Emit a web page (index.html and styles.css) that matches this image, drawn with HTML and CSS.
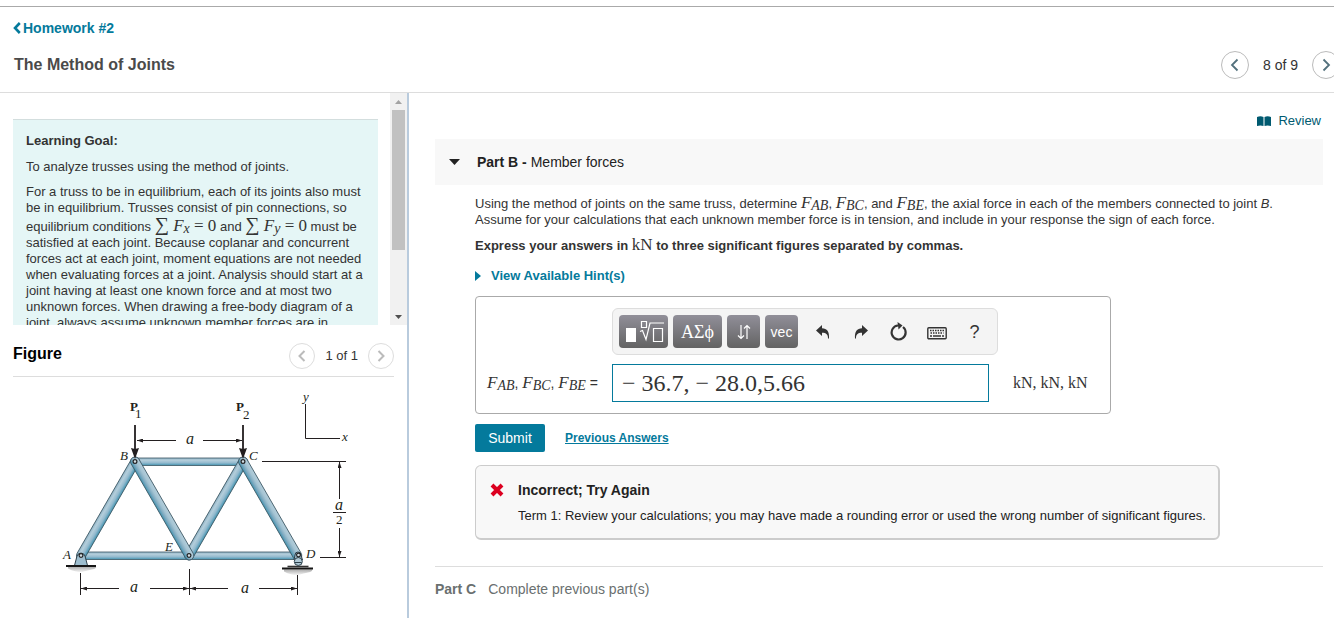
FILE: index.html
```html
<!DOCTYPE html>
<html lang="en">
<head>
<meta charset="utf-8">
<title>The Method of Joints</title>
<link rel="stylesheet" href="styles.css">
</head>
<body>
<header class="header">
  <div class="titles">
    <a class="back" href="#"><svg width="8" height="12" viewBox="0 0 8 12"><path d="M6.800 1 2 6l4.800 5" fill="none" stroke="currentColor" stroke-width="2.600"/></svg>Homework #2</a>
    <h1 class="title">The Method of Joints</h1>
  </div>
  <nav class="pager" aria-label="Items">
    <button class="round" aria-label="Previous item"><svg width="12" height="14" viewBox="0 0 12 14"><path d="M8.500 1.500 3 7l5.500 5.500" fill="none" stroke="currentColor" stroke-width="1.800"/></svg></button>
    <span>8 of 9</span>
    <button class="round" aria-label="Next item"><svg width="12" height="14" viewBox="0 0 12 14"><path d="M3.500 1.500 9 7l-5.500 5.500" fill="none" stroke="currentColor" stroke-width="1.800"/></svg></button>
  </nav>
</header>
<div class="content">
  <aside class="side">
    <div class="scroller">
      <div class="viewport">
        <section class="goal">
          <h2 class="goal-title">Learning Goal:</h2>
          <p>To analyze trusses using the method of joints.</p>
          <p>For a truss to be in equilibrium, each of its joints also must be in equilibrium. Trusses consist of pin connections, so equilibrium conditions <span class="math"><span class="sum">∑</span> <i>F<sub>x</sub></i> = 0</span> and <span class="math"><span class="sum">∑</span> <i>F<sub>y</sub></i> = 0</span> must be satisfied at each joint. Because coplanar and concurrent forces act at each joint, moment equations are not needed when evaluating forces at a joint. Analysis should start at a joint having at least one known force and at most two unknown forces. When drawing a free-body diagram of a joint, always assume unknown member forces are in tension.</p>
        </section>
      </div>
      <div class="scrollbar" aria-hidden="true">
        <svg width="17" height="17" viewBox="0 0 17 17"><path d="M5 11h7L8.500 7z" fill="#a3a3a3"/></svg>
        <div class="thumb"></div>
        <svg class="down" width="17" height="17" viewBox="0 0 17 17"><path d="M5 7h7l-3.500 4z" fill="#505050"/></svg>
      </div>
    </div>
    <section class="figure">
      <div class="figure-head">
        <h2 class="figure-title">Figure</h2>
        <nav class="figure-nav" aria-label="Figures">
          <button class="round faint" aria-label="Previous figure" disabled><svg width="12" height="14" viewBox="0 0 12 14"><path d="M8.500 2 3.500 7l5 5" fill="none" stroke="currentColor" stroke-width="2"/></svg></button>
          <span>1 of 1</span>
          <button class="round faint" aria-label="Next figure" disabled><svg width="12" height="14" viewBox="0 0 12 14"><path d="M3.500 2 8.500 7l-5 5" fill="none" stroke="currentColor" stroke-width="2"/></svg></button>
        </nav>
      </div>
      <svg class="truss" width="381" height="228" viewBox="13 380 381 228" role="img" aria-label="Truss ABCDE loaded at B and C">
        <defs>
          <linearGradient id="steel" x1="0" y1="0" x2="0" y2="1"><stop offset="0" stop-color="#8fb3c6"/><stop offset=".3" stop-color="#b4cedb"/><stop offset=".65" stop-color="#94bace"/><stop offset="1" stop-color="#3f93b0"/></linearGradient>
          <linearGradient id="steel2" x1="0" y1="0" x2="0" y2="1"><stop offset="0" stop-color="#b4cedb"/><stop offset=".4" stop-color="#a5c4d3"/><stop offset=".7" stop-color="#80abc1"/><stop offset="1" stop-color="#3f93b0"/></linearGradient>
          <linearGradient id="ground" x1="0" y1="0" x2="0" y2="1"><stop offset="0" stop-color="#aaa"/><stop offset="1" stop-color="#f4f4f4"/></linearGradient>
          <marker id="tip" viewBox="0 0 6 4" refX="6" refY="2" markerWidth="6" markerHeight="4" markerUnits="userSpaceOnUse" orient="auto"><path d="M0 0 6 2 0 4z" fill="#231f20"/></marker>
        </defs>
        <g stroke="#3c5663" stroke-width=".8">
          <rect x="81" y="552" width="217" height="7.500" fill="url(#steel)"/>
          <rect x="135" y="458" width="108" height="7.500" fill="url(#steel)"/>
          <rect x="-4.500" y="-4.500" width="117.500" height="9" rx="4.500" fill="url(#steel)" transform="translate(81 555.500) rotate(-60)"/>
          <rect x="-4.500" y="-4.500" width="117.500" height="9" rx="4.500" fill="url(#steel)" transform="translate(189 555.500) rotate(-60)"/>
          <rect x="-4.500" y="-4.500" width="117.500" height="9" rx="4.500" fill="url(#steel2)" transform="translate(243 461.500) rotate(60)"/>
          <rect x="-4.500" y="-4.500" width="117.500" height="9" rx="4.500" fill="url(#steel2)" transform="translate(135 461.500) rotate(60)"/>
        </g>
        <path d="M68 566.500h28q1 2-4 3t-8 2-8 0-8-3z" fill="url(#ground)"/>
        <path d="M284 569.500h28q1 2-4 3t-8 2-8 0-8-3z" fill="url(#ground)"/>
        <path d="M74.500 565.500 77 556a4.200 4.200 0 0 1 8 0l2.500 9.500z" fill="#9dbdce" stroke="#2d3f49"/>
        <path d="M66 566h30M282 568.500h31" stroke="#161616" stroke-width="1.800"/>
        <path d="M287.500 566.500h21" stroke="#333" stroke-width="1.600"/>
        <path d="M294 560 295 555a3 3 0 0 1 6 0l1.500 5z" fill="#9dbdce" stroke="#2d3f49"/>
        <circle cx="298.300" cy="561.500" r="4" fill="#aec8d5" stroke="#2d3f49"/><path d="M295 562.500h6.500" stroke="#2d3f49"/>
        <g fill="#d3dfe5" stroke="#222" stroke-width="1.200"><circle cx="81" cy="555.500" r="1.900"/><circle cx="135" cy="461.500" r="1.900"/><circle cx="243" cy="461.500" r="1.900"/><circle cx="189" cy="555.500" r="1.900"/><circle cx="298.500" cy="555" r="1.900"/></g>
        <g fill="none" stroke="#231f20" stroke-width="1">
          <path d="M80.500 573v22M189.500 569v26M297.500 575v20M262 461.500h84M320 557.500h26M333 512.500h13M305.500 404v34.500H340"/>
          <g marker-end="url(#tip)">
            <path d="M176 440.500h-39"/><path d="M203 440.500h39"/>
            <path d="M119 588.500H81"/><path d="M150 588.500h39"/>
            <path d="M228 588.500h-38"/><path d="M259 588.500h38"/>
            <path d="M339.500 499v-37"/><path d="M339.500 528v29"/>
          </g>
        </g>
        <path d="M135 425v27M243 425v27" stroke="#231f20" stroke-width="1.800"/>
        <path d="m131 448 4 1 4-1-4 11zM239 448l4 1 4-1-4 11z" fill="#231f20"/>
        <g class="labels">
          <text class="load" x="130" y="411">P</text><text class="num" x="135" y="418">1</text>
          <text class="load" x="236" y="411">P</text><text class="num" x="243" y="419">2</text>
          <text x="120" y="460">B</text><text x="249" y="460">C</text><text x="63" y="559">A</text><text x="165" y="551">E</text><text x="306" y="558">D</text>
          <text x="303" y="401">y</text><text x="342" y="441">x</text>
          <text class="dim" x="186" y="444">a</text><text class="dim" x="130" y="592">a</text><text class="dim" x="241" y="593">a</text><text class="dim" x="335" y="510">a</text><text class="num" x="336" y="524">2</text>
        </g>
      </svg>
    </section>
  </aside>
  <main class="main">
    <a class="review" href="#"><svg width="14" height="11" viewBox="0 0 14 11"><path d="M0 1Q3.500-.500 6.500 1v9Q3.500 9 0 10zM7.500 1Q10.500-.500 14 1v9q-3.500-1-6.500 0z" fill="currentColor"/></svg>Review</a>
    <h2 class="part"><svg width="11" height="6" viewBox="0 0 11 6"><path d="M0 0h11L5.500 6z" fill="#222"/></svg><span><b>Part B -</b> Member forces</span></h2>
    <div class="problem">
      <p class="statement">Using the method of joints on the same truss, determine <i class="math">F<sub>AB</sub></i>, <i class="math">F<sub>BC</sub></i>, and <i class="math">F<sub>BE</sub></i>, the axial force in each of the members connected to joint <i>B</i>. Assume for your calculations that each unknown member force is in tension, and include in your response the sign of each force.</p>
      <p class="express">Express your answers in <span class="math">kN</span> to three significant figures separated by commas.</p>
      <a class="hints" href="#"><svg width="6" height="10" viewBox="0 0 6 10"><path d="M0 0v10l6-5z" fill="currentColor"/></svg>View Available Hint(s)</a>
      <form class="answer">
        <div class="toolbar">
          <button type="button" class="key wide" aria-label="Templates"><svg width="40" height="24" viewBox="0 0 40 24"><path d="M2 8h10v14H2z" fill="#fff"/><g fill="none" stroke="#fff" stroke-width="1.200"><path d="M17.500 1.500h5v6h-5zM29.500 8.500h9v13h-9z"/><path d="m16 11.500 2.500-1 3.500 9 4-16.500h14"/></g></svg></button>
          <button type="button" class="key wide greek">ΑΣϕ</button>
          <button type="button" class="key" aria-label="Subscript and superscript"><svg width="14" height="16" viewBox="0 0 14 16"><path d="M4 1v13.500M1 11.500l3 3 3-3M10 15V1.500M7 4.500l3-3 3 3" fill="none" stroke="#fff" stroke-width="1.200"/></svg></button>
          <button type="button" class="key vec">vec</button>
          <button type="button" class="tool" aria-label="Undo"><svg width="16" height="16" viewBox="0 0 16 16"><path d="M1 6.500 7 1v3.200c5 .2 7.500 3 7 10.300h-1c.2-4-1.700-5.800-6-5.800V12z" fill="#333"/></svg></button>
          <button type="button" class="tool" aria-label="Redo"><svg width="16" height="16" viewBox="0 0 16 16"><path d="M15 6.500 9 1v3.200c-5 .2-7.500 3-7 10.300h1c-.2-4 1.700-5.800 6-5.800V12z" fill="#333"/></svg></button>
          <button type="button" class="tool" aria-label="Reset"><svg width="18" height="20" viewBox="0 0 18 20"><path d="M13 5A7 7 0 1 1 8 3.500" fill="none" stroke="#333" stroke-width="2.200"/><path d="m7.500 0 5 3.500L8.500 7.500z" fill="#333"/></svg></button>
          <button type="button" class="tool" aria-label="Keyboard"><svg width="20" height="18" viewBox="0 0 20 18"><rect x=".8" y="4.800" width="18.400" height="11" rx="1" fill="#f4f4f4" stroke="#333" stroke-width="1.400"/><path d="M3 7.500h14M3.500 10h13" stroke="#333" stroke-width="1.600" stroke-dasharray="1.500 1"/><path d="M3 13h2m1 0h8m1 0h2" stroke="#333" stroke-width="1.500"/></svg></button>
          <button type="button" class="tool help" aria-label="Help">?</button>
        </div>
        <label class="answer-label" for="answer"><i class="math">F<sub>AB</sub></i>, <i class="math">F<sub>BC</sub></i>, <i class="math">F<sub>BE</sub></i> =</label>
        <input class="answer-input" id="answer" type="text" value="− 36.7, − 28.0,5.66">
        <span class="units">kN, kN, kN</span>
      </form>
      <div class="actions">
        <button class="submit">Submit</button>
        <a class="previous" href="#">Previous Answers</a>
      </div>
      <section class="feedback">
        <svg width="14" height="16" viewBox="0 0 14 16"><path d="m2 3 10 10M12 3 2 13" stroke="#dc0020" stroke-width="4"/></svg>
        <div>
          <h3 class="feedback-title">Incorrect; Try Again</h3>
          <p>Term 1: Review your calculations; you may have made a rounding error or used the wrong number of significant figures.</p>
        </div>
      </section>
    </div>
    <div class="next-part"><b>Part C</b><span>Complete previous part(s)</span></div>
  </main>
</div>
</body>
</html>
```
FILE: styles.css
```css
* { box-sizing: border-box; }
body { margin: 0; padding-top: 6px; min-height: 100vh; display: flex; flex-direction: column; background: #fff; color: #333; font: 13px/16px "Liberation Sans", Arial, sans-serif; overflow: hidden; }
h1, h2, h3, p { margin: 0; }
svg { display: block; flex: none; }
a { color: #047a9c; text-decoration: none; }
button { padding: 0; border: 0; background: none; color: inherit; font: inherit; }

.header { display: flex; justify-content: space-between; align-items: flex-end; border-top: 1px solid #aaa; border-bottom: 1px solid #ddd; padding: 11px 0 13px 13px; }
.titles { display: flex; flex-direction: column; gap: 15px; padding-bottom: 2px; }
.back { display: flex; align-items: center; gap: 2px; font-size: 14px; line-height: 20px; font-weight: bold; }
.title { font-size: 16px; line-height: 24px; color: #4a4a4a; padding-left: 1px; }
.pager { display: flex; align-items: center; gap: 14px; margin-right: -6px; font-size: 14px; }
.round { width: 28px; height: 28px; display: flex; align-items: center; justify-content: center; border: 1px solid #bbb; border-radius: 50%; color: #52707c; }
.faint { width: 26px; height: 26px; border-color: #ddd; color: #bbb; }

.content { flex: 1; display: flex; }
.side { flex: none; width: 409px; border-right: 2px solid #b9cbdd; }
.scroller { display: flex; height: 232px; }
.viewport { flex: 1; overflow: hidden; padding: 26px 12px 0 13px; }
.goal { background: #e5f6f6; border-top: 1px solid #d3dede; padding: 12px 13px; display: flex; flex-direction: column; gap: 9px; }
.goal-title { font-size: 13px; line-height: 18px; }
.scrollbar { width: 17px; display: flex; flex-direction: column; align-items: center; background: #f1f1f1; }
.thumb { width: 13px; height: 140px; background: #c1c1c1; }
.down { margin-top: auto; }
.math { font-family: "Liberation Serif", "Times New Roman", serif; font-size: 17px; line-height: 16px; font-weight: normal; white-space: nowrap; }
.math sub { font-size: 14px; line-height: 0; vertical-align: -2px; }
.goal .math { line-height: 19px; }
.sum { font-size: 20px; line-height: 0; }

.figure { padding: 18px 13px 0; }
.figure-head { display: flex; justify-content: space-between; align-items: center; border-bottom: 1px solid #ddd; padding-bottom: 7px; }
.figure-title { font-size: 16px; line-height: 20px; color: #000; padding-bottom: 4px; }
.figure-nav { display: flex; align-items: center; gap: 10px; }
.truss { margin-top: 3px; }
.labels text { font: italic 13px "Liberation Serif", serif; fill: #231f20; }
.labels .load { font: bold 13px "Liberation Serif", serif; }
.labels .num { font: 13px "Liberation Serif", serif; }
.labels .dim { font-size: 16px; }

.main { flex: 1; min-width: 0; padding: 19px 11px 0 26px; }
.review { display: flex; justify-content: flex-end; align-items: center; gap: 7px; font-size: 13px; line-height: 18px; color: #005a70; padding-right: 2px; }
.part { display: flex; align-items: center; gap: 17px; margin-top: 9px; height: 46px; padding-left: 14px; background: #f8f8f8; font-size: 14px; font-weight: normal; color: #222; }
.problem { padding: 10px 0 0 40px; }
.statement { padding-right: 10px; }
.express { margin-top: 9px; font-weight: bold; }
.hints { display: flex; align-items: center; gap: 10px; margin-top: 14px; font-weight: bold; }
.answer { width: 636px; max-width: 100%; margin-top: 12px; padding: 11px; border: 1px solid #aaa; border-radius: 4px; display: grid; grid-template-columns: 125px 377px auto; align-items: center; row-gap: 9px; }
.toolbar { grid-column: 2 / 4; width: 386px; height: 47px; display: flex; align-items: center; gap: 5px; padding: 0 6px; border: 1px solid #ddd; border-radius: 6px; background: #f4f4f4; }
.key { width: 33px; height: 33px; display: flex; justify-content: center; align-items: center; border-radius: 4px; background: linear-gradient(#918f99, #636363); color: #fff; }
.wide { width: 49px; }
.greek { font-family: "Liberation Serif", serif; font-size: 18px; }
.vec { margin-right: 3px; font-size: 14px; }
.tool { width: 33px; height: 33px; display: flex; justify-content: center; align-items: center; }
.help { font-size: 18px; }
.answer-label { white-space: nowrap; font-size: 14px; }
.answer-input { width: 377px; height: 38px; padding: 0 9px; border: 1px solid #047a9c; background: #fff; color: #333; font: 24px "Liberation Serif", "Times New Roman", serif; }
.units { padding-left: 24px; font: 16px "Liberation Serif", "Times New Roman", serif; }
.actions { display: flex; align-items: center; gap: 20px; margin-top: 10px; }
.submit { width: 70px; height: 28px; border-radius: 2px; background: #047a9c; color: #fff; font-size: 14px; }
.previous { font-size: 12px; font-weight: bold; text-decoration: underline; }
.feedback { width: 745px; max-width: 100%; display: flex; gap: 14px; margin-top: 13px; padding: 16px 10px 14px 14px; border: 1px solid #ccc; border-right-width: 2px; border-bottom-width: 2px; border-radius: 6px; background: #f8f8f8; color: #222; }
.feedback-title { font-size: 14px; line-height: 16px; margin-bottom: 10px; }
.next-part { display: flex; gap: 12px; margin-top: 26px; padding-top: 14px; border-top: 1px solid #ddd; font-size: 14px; color: #6a7070; }
```
